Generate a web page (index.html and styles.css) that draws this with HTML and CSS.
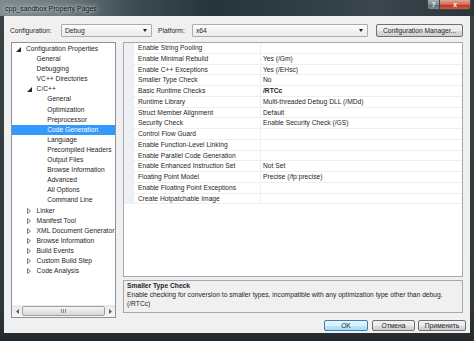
FILE: index.html
```html
<!DOCTYPE html>
<html lang="en">
<head>
  <meta charset="UTF-8">
  <title>cpp_sandbox Property Pages</title>
  <link rel="stylesheet" href="styles.css">
</head>
<body>
  <div class="window">
    <div class="titlebar">
      <span class="title">cpp_sandbox Property Pages</span>
      <div class="caption">
        <span class="help">?</span>
        <span class="close">x</span>
      </div>
    </div>

    <div class="client">
      <div class="toolbar">
        <span class="label cfg-label">Configuration:</span>
        <div class="combo cfg-combo">Debug<span class="combo-arrow"></span></div>
        <span class="label plat-label">Platform:</span>
        <div class="combo plat-combo">x64<span class="combo-arrow"></span></div>
        <button class="btn cfg-mgr">Configuration Manager...</button>
      </div>

      <div class="main">
        <div class="tree">
          <div class="tree-items">
            <div class="item lvl0"><span class="exp"><svg width="5" height="5"><path d="M5 0V5H0Z" fill="#2b2b2b"/></svg></span>Configuration Properties</div>
            <div class="item lvl1"><span class="exp"></span>General</div>
            <div class="item lvl1"><span class="exp"></span>Debugging</div>
            <div class="item lvl1"><span class="exp"></span>VC++ Directories</div>
            <div class="item lvl1"><span class="exp"><svg width="5" height="5"><path d="M5 0V5H0Z" fill="#2b2b2b"/></svg></span>C/C++</div>
            <div class="item lvl2"><span class="exp"></span>General</div>
            <div class="item lvl2"><span class="exp"></span>Optimization</div>
            <div class="item lvl2"><span class="exp"></span>Preprocessor</div>
            <div class="item lvl2 selected"><span class="exp"></span>Code Generation</div>
            <div class="item lvl2"><span class="exp"></span>Language</div>
            <div class="item lvl2"><span class="exp"></span>Precompiled Headers</div>
            <div class="item lvl2"><span class="exp"></span>Output Files</div>
            <div class="item lvl2"><span class="exp"></span>Browse Information</div>
            <div class="item lvl2"><span class="exp"></span>Advanced</div>
            <div class="item lvl2"><span class="exp"></span>All Options</div>
            <div class="item lvl2"><span class="exp"></span>Command Line</div>
            <div class="item lvl1"><span class="exp"><svg width="4" height="6"><path d="M0.5 0.5L3.5 3L0.5 5.5Z" fill="none" stroke="#7a7a7a"/></svg></span>Linker</div>
            <div class="item lvl1"><span class="exp"><svg width="4" height="6"><path d="M0.5 0.5L3.5 3L0.5 5.5Z" fill="none" stroke="#7a7a7a"/></svg></span>Manifest Tool</div>
            <div class="item lvl1"><span class="exp"><svg width="4" height="6"><path d="M0.5 0.5L3.5 3L0.5 5.5Z" fill="none" stroke="#7a7a7a"/></svg></span>XML Document Generator</div>
            <div class="item lvl1"><span class="exp"><svg width="4" height="6"><path d="M0.5 0.5L3.5 3L0.5 5.5Z" fill="none" stroke="#7a7a7a"/></svg></span>Browse Information</div>
            <div class="item lvl1"><span class="exp"><svg width="4" height="6"><path d="M0.5 0.5L3.5 3L0.5 5.5Z" fill="none" stroke="#7a7a7a"/></svg></span>Build Events</div>
            <div class="item lvl1"><span class="exp"><svg width="4" height="6"><path d="M0.5 0.5L3.5 3L0.5 5.5Z" fill="none" stroke="#7a7a7a"/></svg></span>Custom Build Step</div>
            <div class="item lvl1"><span class="exp"><svg width="4" height="6"><path d="M0.5 0.5L3.5 3L0.5 5.5Z" fill="none" stroke="#7a7a7a"/></svg></span>Code Analysis</div>
          </div>
          <div class="hscroll">
            <span class="sb-btn"><svg width="3" height="5"><path d="M3 0V5L0 2.5Z" fill="#606060"/></svg></span>
            <span class="sb-thumb"><span class="grip"></span></span>
            <span class="sb-btn"><svg width="3" height="5"><path d="M0 0V5L3 2.5Z" fill="#606060"/></svg></span>
          </div>
        </div>

        <div class="right">
          <div class="grid">
            <div class="row"><span class="gut"></span><span class="name">Enable String Pooling</span><span class="val"></span></div>
            <div class="row"><span class="gut"></span><span class="name">Enable Minimal Rebuild</span><span class="val">Yes (/Gm)</span></div>
            <div class="row"><span class="gut"></span><span class="name">Enable C++ Exceptions</span><span class="val">Yes (/EHsc)</span></div>
            <div class="row"><span class="gut"></span><span class="name">Smaller Type Check</span><span class="val">No</span></div>
            <div class="row"><span class="gut"></span><span class="name">Basic Runtime Checks</span><span class="val bold">/RTCc</span></div>
            <div class="row"><span class="gut"></span><span class="name">Runtime Library</span><span class="val">Multi-threaded Debug DLL (/MDd)</span></div>
            <div class="row"><span class="gut"></span><span class="name">Struct Member Alignment</span><span class="val">Default</span></div>
            <div class="row"><span class="gut"></span><span class="name">Security Check</span><span class="val">Enable Security Check (/GS)</span></div>
            <div class="row"><span class="gut"></span><span class="name">Control Flow Guard</span><span class="val"></span></div>
            <div class="row"><span class="gut"></span><span class="name">Enable Function-Level Linking</span><span class="val"></span></div>
            <div class="row"><span class="gut"></span><span class="name">Enable Parallel Code Generation</span><span class="val"></span></div>
            <div class="row"><span class="gut"></span><span class="name">Enable Enhanced Instruction Set</span><span class="val">Not Set</span></div>
            <div class="row"><span class="gut"></span><span class="name">Floating Point Model</span><span class="val">Precise (/fp:precise)</span></div>
            <div class="row"><span class="gut"></span><span class="name">Enable Floating Point Exceptions</span><span class="val"></span></div>
            <div class="row"><span class="gut"></span><span class="name">Create Hotpatchable Image</span><span class="val"></span></div>
          </div>
          <div class="desc">
            <div class="desc-title">Smaller Type Check</div>
            <div class="desc-line">Enable checking for conversion to smaller types, incompatible with any optimization type other than debug.</div>
            <div class="desc-line">(/RTCc)</div>
          </div>
        </div>
      </div>

      <div class="buttons">
        <button class="btn default ok">OK</button>
        <button class="btn cancel">Отмена</button>
        <button class="btn apply">Применить</button>
      </div>
    </div>
  </div>
</body>
</html>
```

FILE: styles.css
```css
body {
  margin: 0;
  width: 474px;
  height: 341px;
  overflow: hidden;
  background: #353b3f;
  font-family: "Liberation Sans", Arial, sans-serif;
  font-size: 6.7px;
  color: #1e1e1e;
}
.window {
  display: flex;
  flex-direction: column;
  height: 341px;
  background: linear-gradient(180deg, #3a4246 0%, #30373b 90%, #23292c 100%);
}
.titlebar {
  height: 16px;
  display: flex;
  justify-content: space-between;
  align-items: flex-start;
  background: linear-gradient(90deg, #7f8c91 0%, #6a777c 14%, #3e4b52 28%, #26343b 45%, #2e3d44 62%, #3b474d 80%, #2a3439 100%);
}
.title {
  margin: 4px 0 0 5px;
  line-height: 9px;
  font-size: 7px;
  color: #111;
  text-shadow: 0 0 3px #dfe6e8, 0 0 6px #dfe6e8;
}
.caption {
  display: flex;
  margin-right: 3px;
}
.help,
.close {
  height: 10px;
  line-height: 9px;
  text-align: center;
  color: #fff;
  font-weight: bold;
  box-sizing: border-box;
  border: 1px solid #3a464c;
  border-top: none;
}
.help {
  width: 13px;
  border-radius: 0 0 0 3px;
  background: linear-gradient(180deg, #a3b0b6 0%, #7d8b92 50%, #5f6d74 55%, #7a8a91 100%);
}
.close {
  width: 31px;
  border-left: none;
  border-radius: 0 0 3px 0;
  background: linear-gradient(180deg, #e4a595 0%, #d06a55 50%, #b8331f 55%, #d45a3f 100%);
}
.client {
  flex: 1;
  margin: 0 4px 8px;
  background: #f0f0f0;
  display: flex;
  flex-direction: column;
}

/* top bar */
.toolbar {
  display: flex;
  align-items: center;
  height: 13px;
  margin: 8px 0 0 6px;
}
.label {
  white-space: nowrap;
}
.cfg-label {
  width: 51px;
}
.plat-label {
  width: 34px;
  margin-left: 6px;
}
.combo {
  height: 13px;
  box-sizing: border-box;
  border: 1px solid #acacac;
  border-radius: 1px;
  background: linear-gradient(180deg, #fdfdfd 0%, #f3f3f3 50%, #ebebeb 100%);
  display: flex;
  align-items: center;
  padding-left: 3px;
  position: relative;
}
.cfg-combo {
  width: 91px;
}
.plat-combo {
  width: 176px;
}
.combo-arrow {
  position: absolute;
  right: 4px;
  top: 4px;
  width: 0;
  height: 0;
  border-left: 2.5px solid transparent;
  border-right: 2.5px solid transparent;
  border-top: 3px solid #222;
}
.btn {
  font-family: inherit;
  font-size: 6.7px;
  color: #1e1e1e;
  padding: 0;
  box-sizing: border-box;
  border: 1px solid #707070;
  border-radius: 2px;
  background: linear-gradient(180deg, #f2f2f2 0%, #ebebeb 50%, #dddddd 52%, #cfcfcf 100%);
  white-space: nowrap;
}
.cfg-mgr {
  width: 87px;
  height: 13px;
  margin-left: 8px;
}

/* main area */
.main {
  display: flex;
  gap: 7px;
  height: 276px;
  margin: 5px 7px 0;
}
.tree {
  width: 105px;
  box-sizing: border-box;
  border: 1px solid #8e939a;
  background: #fff;
  display: flex;
  flex-direction: column;
}
.tree-items {
  flex: 1;
  padding-top: 1px;
  overflow: hidden;
}
.item {
  height: 10.1px;
  line-height: 10.1px;
  display: flex;
  align-items: center;
  white-space: nowrap;
}
.lvl0 { padding-left: 1px; }
.lvl1 { padding-left: 11.6px; }
.lvl2 { padding-left: 22.2px; }
.exp {
  width: 11px;
  height: 10px;
  margin-right: 2px;
  display: flex;
  align-items: center;
  justify-content: center;
  flex-shrink: 0;
}
.selected {
  background: #3399ff;
  color: #fff;
}
.hscroll {
  height: 12px;
  display: flex;
  align-items: center;
  background: linear-gradient(180deg, #e8e8e8, #f5f5f5);
}
.sb-btn {
  width: 10px;
  display: flex;
  justify-content: center;
}
.sb-thumb {
  flex: 1;
  height: 10px;
  box-sizing: border-box;
  border: 1px solid #a0a0a0;
  border-radius: 2px;
  background: linear-gradient(180deg, #f6f6f6 0%, #e6e6e6 50%, #d8d8d8 100%);
  display: flex;
  align-items: center;
  justify-content: center;
}
.grip {
  width: 5px;
  height: 4px;
  background: repeating-linear-gradient(90deg, #8a8a8a 0 1px, transparent 1px 2px);
}

.right {
  width: 340px;
  display: flex;
  flex-direction: column;
}
.grid {
  height: 235px;
  box-sizing: border-box;
  border: 1px solid #a5a9ae;
  background: #fff;
}
.row {
  display: grid;
  grid-template-columns: 10px 127px 1fr;
  height: 10.75px;
}
.gut {
  background: #edf1f6;
}
.name,
.val {
  line-height: 10.75px;
  box-sizing: border-box;
  border-bottom: 1px solid #efefef;
  white-space: nowrap;
  overflow: hidden;
}
.name {
  padding-left: 4px;
  border-right: 1px solid #efefef;
}
.val {
  padding-left: 2px;
}
.bold {
  font-weight: bold;
}
.desc {
  height: 33px;
  margin-top: 3px;
  box-sizing: border-box;
  border: 1px solid #a5a9ae;
  padding: 0 0 0 3px;
  line-height: 9px;
}
.desc-title {
  font-weight: bold;
}
.desc-line {
  white-space: nowrap;
}

/* bottom buttons */
.buttons {
  display: flex;
  justify-content: flex-end;
  margin: 2px 4px 0 0;
}
.buttons .btn {
  height: 11px;
}
.ok {
  width: 44px;
}
.cancel {
  width: 43px;
  margin-left: 4px;
}
.apply {
  width: 48px;
  margin-left: 3px;
}
.default {
  border-color: #3c7fb1;
  background: linear-gradient(180deg, #eaf6fd 0%, #d9f0fc 50%, #bee6fd 52%, #a7d9f5 100%);
}
```
